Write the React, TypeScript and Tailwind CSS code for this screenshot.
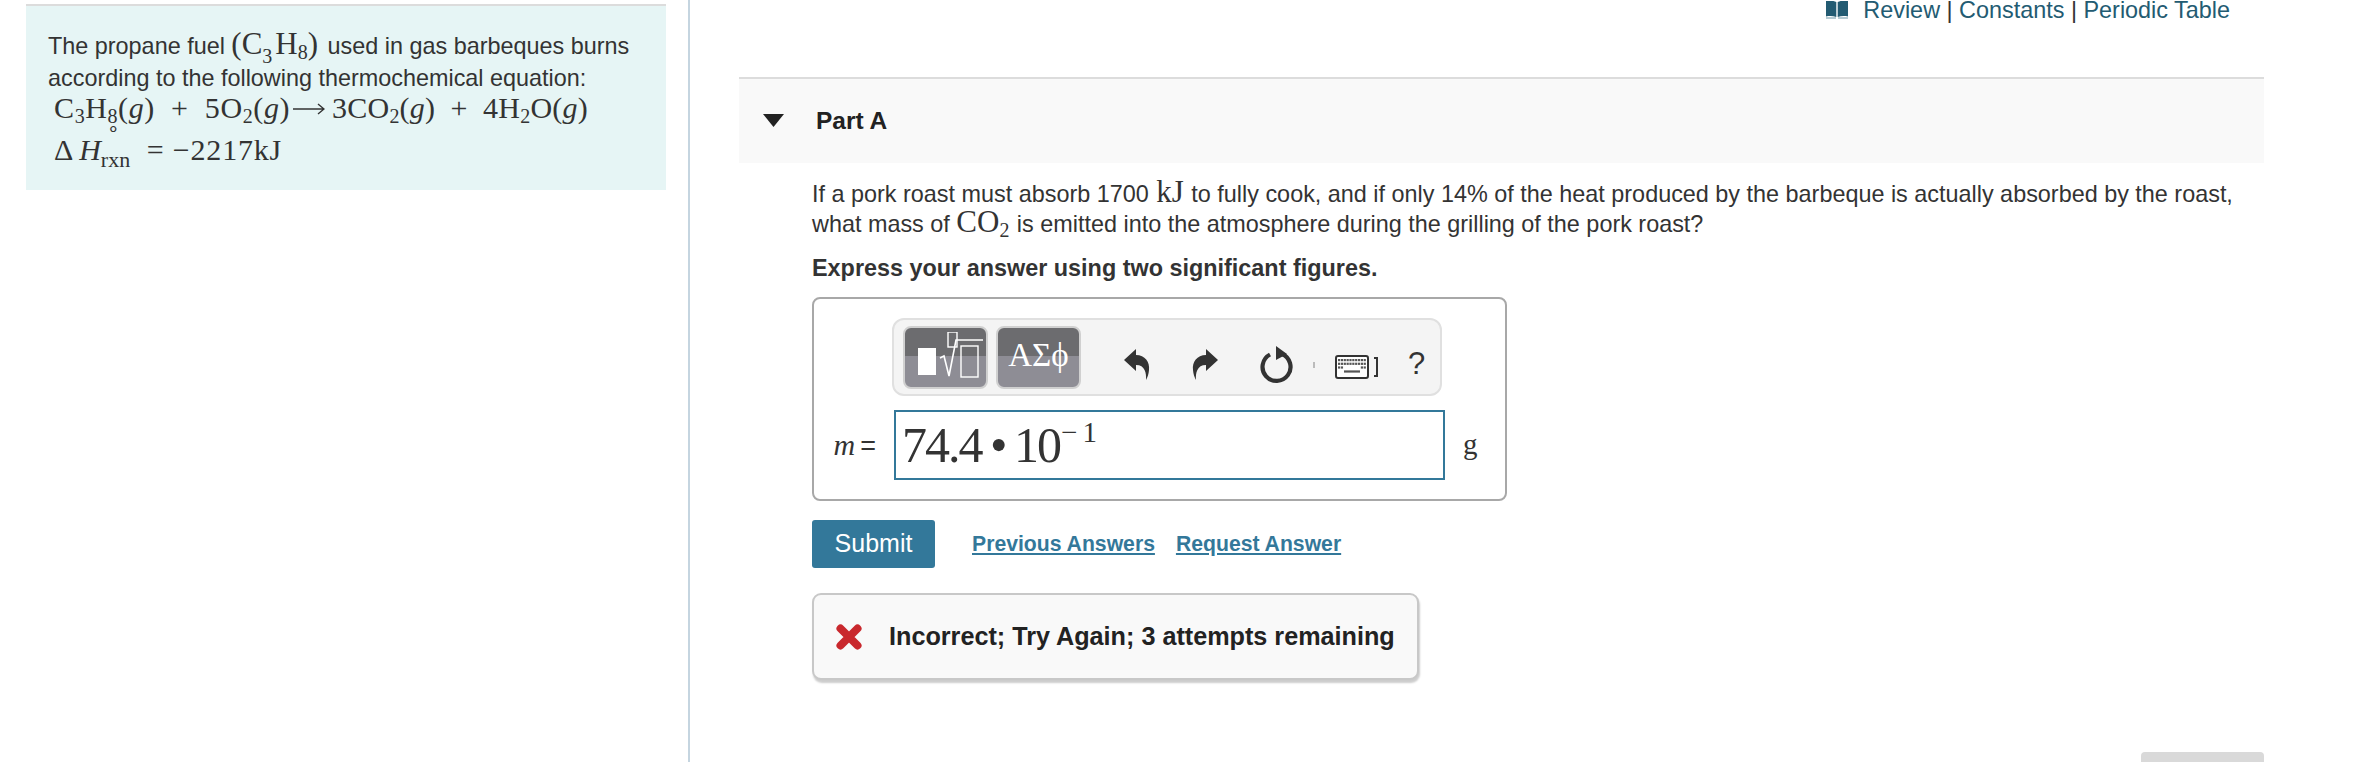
import React from "react";

const serif = "font-['Liberation_Serif',serif]";

function Book() {
  return (
    <svg width="22" height="18" viewBox="0 0 22 18" className="shrink-0">
      <path d="M0 0 C3 -0.6 7 -0.6 10.3 1 V16 C7 14.8 3 14.8 0 15.5 Z M22 0 C19 -0.6 15 -0.6 11.7 1 V16 C15 14.8 19 14.8 22 15.5 Z" fill="#235b72" />
      <path d="M0 17 H10 M12 17 H22" stroke="#9db9c4" strokeWidth="1.5" />
    </svg>
  );
}

function Undo({ flip }: { flip?: boolean }) {
  return (
    <svg width="26" height="32" viewBox="0 0 26 32" className={flip ? "-scale-x-100" : ""}>
      <path
        d="M0 11 L12 0 V6 C21 6 26 13 25 21 C24.7 25 23.6 28 22 31 C22.6 24 21 16 12 16 V22 Z"
        fill="#333"
      />
    </svg>
  );
}

function Reset() {
  return (
    <svg width="34" height="38" viewBox="0 0 34 38">
      <path d="M10 8.5 A14 14 0 1 0 22 8" fill="none" stroke="#333" strokeWidth="4.2" />
      <path d="M16 0 L27 8 L16 14 Z" fill="#333" />
    </svg>
  );
}

function Keyboard() {
  const keys: React.ReactNode[] = [];
  for (let r = 0; r < 3; r++)
    for (let c = 0; c < 10; c++)
      if (r < 2 || c < 2 || c > 7)
        keys.push(
          <rect key={`${r}-${c}`} x={3 + c * 2.85} y={4 + r * 3.7} width="2.2" height="2.2" fill="#555" />
        );
  return (
    <svg width="34" height="24" viewBox="0 0 34 24">
      <rect x="1" y="1" width="32" height="22" rx="2" fill="#fff" stroke="#333" strokeWidth="2" />
      {keys}
      <rect x="9" y="11.4" width="16" height="2.2" fill="#fff" />
      <rect x="9" y="15.4" width="16" height="2.2" fill="#555" />
    </svg>
  );
}

function Templates() {
  return (
    <svg width="76" height="50" viewBox="0 0 76 50">
      <rect x="10" y="16" width="18" height="27" fill="#fff" />
      <rect x="40" y="0" width="9" height="15" fill="none" stroke="#fff" strokeWidth="1.4" />
      <path d="M32 26 L36 24 L41 44 L48 8 H75" fill="none" stroke="#fff" strokeWidth="1.6" />
      <rect x="53" y="14" width="17" height="31" fill="none" stroke="#fff" strokeWidth="1.4" />
    </svg>
  );
}

function Cross() {
  return (
    <svg width="26" height="26" viewBox="0 0 26 26" className="shrink-0">
      <path d="M4.5 4.5 L21.5 21.5 M21.5 4.5 L4.5 21.5" stroke="#c9282d" strokeWidth="8" strokeLinecap="round" />
    </svg>
  );
}

function Arrow() {
  return (
    <svg width="32" height="14" viewBox="0 0 32 14" className="inline-block ml-[3px] mr-[7px] align-[2px]">
      <path d="M0 7 H30 M25 2 L31 7 L25 12" fill="none" stroke="#333" strokeWidth="1.4" />
    </svg>
  );
}

function ToolButton({ children }: { children: React.ReactNode }) {
  return (
    <div className="w-[85px] h-[63px] rounded-lg border-2 border-[#d0d0d0] flex items-center justify-center bg-[linear-gradient(#6c6c6f_0%,#6c6c6f_47%,#8e8d95_47%,#8e8d95_100%)]">
      {children}
    </div>
  );
}

const sub = "text-[20px] leading-none";

export default function App() {
  return (
    <div className="w-[2356px] h-[762px] overflow-hidden bg-white flex font-['Liberation_Sans',sans-serif] text-[#333]">
      <aside className="w-[690px] h-full shrink-0 border-r-2 border-[#c5d5e0] pl-[26px] pr-[24px] pt-[4px]">
        <div className="w-[640px] h-[186px] bg-[#e6f5f5] border-t-2 border-[#dcdcdc] pl-[22px] pt-[22px] text-[23.4px] leading-[32px]">
          <p className="whitespace-nowrap">
            The propane fuel{" "}
            <span className={`${serif} text-[31px] mr-[3px]`}>
              (C<sub className={`${sub} mr-[3px] -bottom-[9px]`}>3</sub>H<sub className={sub}>8</sub>)
            </span>{" "}
            used in gas barbeques burns
          </p>
          <p className="whitespace-nowrap">according to the following thermochemical equation:</p>
          <p className={`${serif} text-[30px] tracking-[0.6px] leading-[32px] -mt-[2px] pl-[6px] whitespace-nowrap`}>
            C<sub className={sub}>3</sub>H<sub className={sub}>8</sub>(<i>g</i>) &nbsp;+&nbsp; 5O<sub className={sub}>2</sub>(<i>g</i>)
            <Arrow />
            <span className="tracking-[0.2px]">
              3CO<sub className={sub}>2</sub>(<i>g</i>) &nbsp;+&nbsp; 4H<sub className={sub}>2</sub>O(<i>g</i>)
            </span>
          </p>
          <p className={`${serif} text-[30px] leading-[32px] pl-[6px] mt-[10px] whitespace-nowrap`}>
            Δ <i>H</i>
            <span className="relative inline-block w-[38px] h-[10px]">
              <span className="absolute left-[6px] top-[-31px] text-[20px] leading-none">∘</span>
              <span className="absolute left-0 top-[-1px] text-[22px] leading-none">rxn</span>
            </span>
            <span className="ml-[8px] tracking-[0.8px]">= −2217kJ</span>
          </p>
        </div>
      </aside>

      <main className="flex-1 pl-[49px] pr-[92px] flex flex-col">
        <div className="h-[21px] shrink-0 flex items-start justify-end gap-[15px] pr-[34px] text-[23.4px] leading-[20px] text-[#235b72] whitespace-nowrap">
          <div className="mt-[1px]"><Book /></div>
          <div>
            Review <span className="text-[#333]">|</span> Constants <span className="text-[#333]">|</span> Periodic Table
          </div>
        </div>

        <div className="mt-[56px] h-[86px] shrink-0 bg-[#f9f9f9] border-t-2 border-[#dcdcdc] flex items-center">
          <svg width="21" height="13" viewBox="0 0 21 13" className="ml-[24px] mb-[2px]">
            <path d="M0 0 H21 L10.5 13 Z" fill="#222" />
          </svg>
          <span className="ml-[32px] text-[24.5px] font-bold text-[#222]">Part A</span>
        </div>

        <div className="pl-[73px] pt-[15px] flex flex-col items-start">
          <p className="text-[23.4px] leading-[27px] whitespace-nowrap">
            If a pork roast must absorb 1700 <span className={`${serif} text-[31px] mx-[1px]`}>kJ</span> to fully cook, and if only 14% of the heat produced by the barbeque is actually absorbed by the roast,
            <br />
            what mass of <span className={`${serif} text-[31px] mr-[1px]`}>CO<sub className={sub}>2</sub></span> is emitted into the atmosphere during the grilling of the pork roast?
          </p>
          <p className="mt-[16px] text-[23.4px] leading-[28px] font-bold">Express your answer using two significant figures.</p>

          <div className="mt-[15px] w-[695px] h-[204px] rounded-[8px] border-2 border-[#a8a8a8] pl-[78px] pt-[19px]">
            <div className="w-[550px] h-[78px] rounded-[12px] border-2 border-[#e0e0e0] bg-[#f4f4f4] flex items-center pl-[9px]">
              <ToolButton><Templates /></ToolButton>
              <div className="ml-[8px]">
                <ToolButton>
                  <span className={`${serif} text-[33px] text-white leading-none mb-[4px]`}>ΑΣϕ</span>
                </ToolButton>
              </div>
              <div className="ml-[43px] mt-[15px]"><Undo /></div>
              <div className="ml-[42px] mt-[15px]"><Undo flip /></div>
              <div className="ml-[42px] mt-[15px]"><Reset /></div>
              <div className="ml-[19px] mt-[15px] w-[2px] h-[6px] bg-[#bbb]" />
              <div className="ml-[20px] mt-[20px]"><Keyboard /></div>
              <div className="ml-[5px] mt-[20px] w-[4px] h-[20px] border-y-2 border-r-2 border-[#333]" />
              <span className="ml-[30px] mt-[12px] text-[31px] leading-none text-[#333]">?</span>
            </div>
            <div className="mt-[14px] -ml-[78px] flex items-center">
              <span className={`w-[80px] text-right pr-[18px] text-[30px] leading-none whitespace-nowrap ${serif}`}>
                <i>m</i><span className="font-['Liberation_Sans',sans-serif] text-[27px] ml-[5px]">=</span>
              </span>
              <div className={`w-[551px] h-[70px] border-2 border-[#33789a] pl-[6px] ${serif} text-[50px] tracking-[-2px] [word-spacing:-2px] leading-[66px] whitespace-nowrap`}>
                74.4 • 10
                <span className="relative -top-[20px] text-[29px] tracking-[0px] ml-[1px]">− 1</span>
              </div>
              <span className={`ml-[18px] text-[29px] ${serif}`}>g</span>
            </div>
          </div>

          <div className="mt-[19px] flex items-center">
            <div className="w-[123px] h-[48px] rounded-[3px] bg-[#33789a] text-white text-[25px] flex items-center justify-center">Submit</div>
            <a className="ml-[37px] text-[21.2px] font-bold underline text-[#33789a] whitespace-nowrap">Previous Answers</a>
            <a className="ml-[21px] text-[21.2px] font-bold underline text-[#33789a] whitespace-nowrap">Request Answer</a>
          </div>

          <div className="mt-[25px] w-[607px] h-[87px] rounded-[9px] border-2 border-[#c8c8c8] bg-[#f9f9f9] shadow-[1px_3px_2px_rgba(0,0,0,0.2)] flex items-center pl-[22px]">
            <Cross />
            <span className="ml-[27px] text-[25.2px] font-bold text-[#222] whitespace-nowrap">Incorrect; Try Again; 3 attempts remaining</span>
          </div>
        </div>
        <div className="self-end mt-[72px] w-[123px] h-[10px] rounded-t-[4px] bg-[#d9d9d9] shrink-0" />
      </main>
    </div>
  );
}
